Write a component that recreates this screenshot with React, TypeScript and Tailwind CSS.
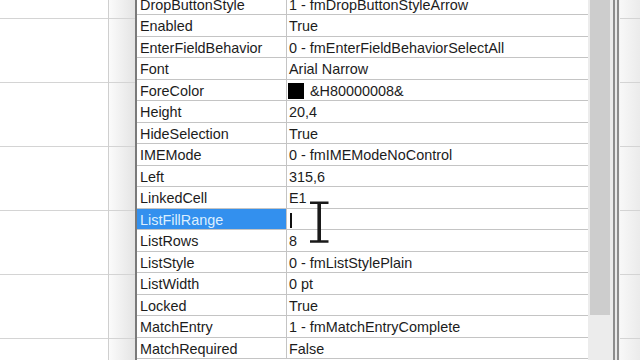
import React from 'react';

interface Prop {
  name: string;
  value: string;
  kind?: 'color' | 'caret';
}

const props: Prop[] = [
  { name: 'DropButtonStyle', value: '1 - fmDropButtonStyleArrow' },
  { name: 'Enabled', value: 'True' },
  { name: 'EnterFieldBehavior', value: '0 - fmEnterFieldBehaviorSelectAll' },
  { name: 'Font', value: 'Arial Narrow' },
  { name: 'ForeColor', value: '&H80000008&', kind: 'color' },
  { name: 'Height', value: '20,4' },
  { name: 'HideSelection', value: 'True' },
  { name: 'IMEMode', value: '0 - fmIMEModeNoControl' },
  { name: 'Left', value: '315,6' },
  { name: 'LinkedCell', value: 'E1' },
  { name: 'ListFillRange', value: '', kind: 'caret' },
  { name: 'ListRows', value: '8' },
  { name: 'ListStyle', value: '0 - fmListStylePlain' },
  { name: 'ListWidth', value: '0 pt' },
  { name: 'Locked', value: 'True' },
  { name: 'MatchEntry', value: '1 - fmMatchEntryComplete' },
  { name: 'MatchRequired', value: 'False' },
];

// spreadsheet rows showing behind the properties window
function SheetRows({ shade }: { shade: string }) {
  return (
    <div className={`flex flex-col h-full ${shade}`}>
      <div className="h-[19px] shrink-0 border-b border-[#d4d4d4]" />
      {Array.from({ length: 5 }, (_, i) => (
        <div key={i} className="h-[64px] shrink-0 border-b border-[#d4d4d4]" />
      ))}
    </div>
  );
}

export default function App() {
  return (
    <div
      className="relative flex w-[640px] h-[360px] overflow-hidden bg-white text-[14.4px] text-[#1c1c1c]"
      style={{ fontFamily: '"Liberation Sans", Arial, sans-serif' }}
    >
      {/* Sheet, left */}
      <div className="flex w-[135px] shrink-0">
        <div className="w-[109px] shrink-0 border-r border-[#cfcfcf]">
          <SheetRows shade="bg-white" />
        </div>
        <div className="flex-1">
          <SheetRows shade="bg-gradient-to-r from-[#fbfbfb] to-[#e4e4e4]" />
        </div>
      </div>

      {/* Properties window */}
      <div className="flex w-[485px] shrink-0 border-l-2 border-[#7a7a7a]">
        <div className="w-[451px] shrink-0 flex flex-col mt-[-6.25px]">
          {props.map((p) => {
            const selected = p.kind === 'caret';
            return (
              <div key={p.name} className="flex h-[21.5px] shrink-0 border-b border-[#c4c4c4] leading-[22.5px]">
                <div
                  className={`w-[150px] shrink-0 border-r border-[#c4c4c4] pl-[3px] whitespace-nowrap ${
                    selected ? 'bg-[#3390ee] text-[#dcefff]' : ''
                  }`}
                >
                  {p.name}
                </div>
                <div className="flex-1 flex items-start pl-[2px] whitespace-nowrap overflow-hidden">
                  {p.kind === 'color' && (
                    <>
                      <span className="inline-block w-[16px] h-[16px] bg-black ml-[-1px] mt-[3px]" />
                      <span className="ml-[6px]">{p.value}</span>
                    </>
                  )}
                  {p.kind === 'caret' && <span className="inline-block w-[1.5px] h-[15px] bg-[#111] ml-[1px] mt-[4px]" />}
                  {!p.kind && p.value}
                </div>
              </div>
            );
          })}
        </div>

        {/* Scrollbar */}
        <div className="w-[25px] shrink-0 bg-[#ececec] pl-[2px]">
          <div className="w-[20px] h-[315px] bg-[#cdcdcd]" />
        </div>
        <div className="w-[2px] bg-[#8c8c8c]" />
        <div className="w-[2px] bg-[#e9e9e9]" />
        <div className="w-[2px] bg-[#8c8c8c]" />
        <div className="w-[1px] bg-[#f2f2f2]" />
      </div>

      {/* Sheet, right */}
      <div className="flex-1">
        <SheetRows shade="bg-gradient-to-r from-[#f8f8f8] to-[#ebebeb]" />
      </div>

      {/* Mouse I-beam cursor */}
      <svg className="absolute left-[308px] top-[198px]" width="24" height="48" viewBox="0 0 24 48">
        <path d="M2 4.8 H20.5 M2 43.5 H20.5" stroke="#1a1a1a" strokeWidth="2.6" fill="none" />
        <path d="M11.2 4.8 V43.5" stroke="#1a1a1a" strokeWidth="3.6" fill="none" />
      </svg>
    </div>
  );
}
